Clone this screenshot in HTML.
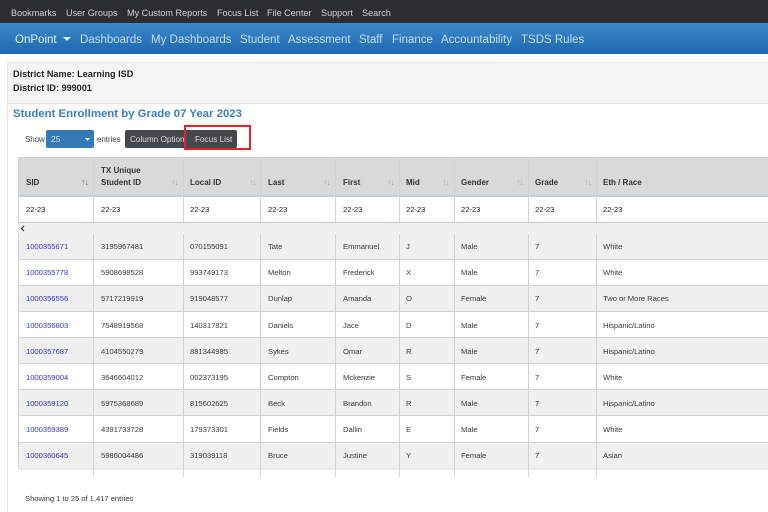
<!DOCTYPE html>
<html><head><meta charset="utf-8">
<style>
*{box-sizing:border-box}
html,body{margin:0;padding:0}
body{width:768px;height:512px;overflow:hidden;background:#fff;position:relative;font-family:"Liberation Sans",sans-serif;color:#333}
#wrap{position:absolute;left:0;top:0;width:768px;height:512px;overflow:hidden;filter:blur(0.3px)}
.a{position:absolute;white-space:nowrap}
#top{left:0;top:0;width:768px;height:23px;background:#2c2d30}
.t{top:6.5px;font-size:9.1px;line-height:12px;color:#d2d2d2}
#nav{left:0;top:23px;width:768px;height:31px;background:linear-gradient(#3f87c8,#1b69b3)}
.n{top:31.5px;font-size:11.5px;line-height:16px;color:#c6dcf0}
#panel{left:7px;top:62px;width:770px;height:450px;border:1px solid #e6e6e6;border-right:0;border-bottom:0}
#ph{left:8px;top:63px;width:760px;height:41px;background:#f5f5f5;border-bottom:1px solid #e3e3e3}
.b{font-weight:bold;font-size:9.1px;line-height:12px;color:#222}
.c{font-size:7.7px;line-height:10px;color:#3c3c3c;letter-spacing:-.06px}
.h{font-weight:bold;font-size:8px;line-height:12px;color:#333}
.s{font-size:9px;line-height:10px;color:#b0b0b0;letter-spacing:-1px}
.f{font-size:7.7px;line-height:10px;color:#1c1c1c;letter-spacing:-.08px}
.vl{position:absolute;width:1px;background:#cdd3d8}
.hl{position:absolute;left:18px;width:750px;height:1px;background:#cdd3d8}
.row{position:absolute;left:18px;width:750px}
.l{color:#3636e0}.m{color:#4a3a35}
</style></head><body><div id="wrap">
<div class="a" id="top"></div>
<div class="a t" style="left:11px">Bookmarks</div>
<div class="a t" style="left:66px">User Groups</div>
<div class="a t" style="left:127px">My Custom Reports</div>
<div class="a t" style="left:217px">Focus List</div>
<div class="a t" style="left:267px">File Center</div>
<div class="a t" style="left:321px">Support</div>
<div class="a t" style="left:362px">Search</div>
<div class="a" id="nav"></div>
<div class="a n" style="left:15px;color:#e4eff9">OnPoint</div>
<svg class="a" style="left:63px;top:37px" width="8" height="5"><path d="M0 0H8L4 4Z" fill="#e4eff9"/></svg>
<div class="a n" style="left:80px">Dashboards</div>
<div class="a n" style="left:151px">My Dashboards</div>
<div class="a n" style="left:240px">Student</div>
<div class="a n" style="left:288px">Assessment</div>
<div class="a n" style="left:359px">Staff</div>
<div class="a n" style="left:392px">Finance</div>
<div class="a n" style="left:441px">Accountability</div>
<div class="a n" style="left:521px">TSDS Rules</div>

<div class="a" id="panel"></div>
<div class="a" id="ph"></div>
<div class="a b" style="left:13px;top:68px">District Name: Learning ISD</div>
<div class="a b" style="left:13px;top:82px">District ID: 999001</div>
<div class="a" style="left:13px;top:107px;font-size:11.4px;line-height:15px;font-weight:bold;color:#3a7fc0">Student Enrollment by Grade 07 Year 2023</div>

<div class="a c" style="left:25px;top:134.5px;font-size:8px">Show</div>
<div class="a" style="left:46px;top:130px;width:48px;height:18px;background:#337ab7;border-radius:2px;color:#d5e5f3;font-size:8.5px;line-height:19px;padding-left:5px">25</div>
<svg class="a" style="left:85px;top:138px" width="6" height="4"><path d="M0 0H5L2.5 3Z" fill="#e8f0f8"/></svg>
<div class="a c" style="left:97px;top:134.5px;font-size:8px">entries</div>
<div class="a" style="left:125px;top:130px;width:62px;height:18px;background:#44474c;border-radius:2px 0 0 2px;color:#ddd;font-size:8.2px;line-height:19px;padding-left:5px;overflow:hidden">Column Options</div>
<div class="a" style="left:185px;top:130px;width:52px;height:18px;background:#44474c;border-radius:0 2px 2px 0;color:#ddd;font-size:8.2px;line-height:19px;padding-left:10px">Focus List</div>
<div class="a" style="left:184px;top:125px;width:67px;height:25px;border:2.5px solid #e8202a"></div>

<div class="row" style="top:157px;height:40px;background:#d9d9d9;border-top:1px solid #c9ced3;border-bottom:2px solid #c3cad1"></div>
<div class="row" style="top:222px;height:12px;background:#efefef;border-top:1px solid #c3cad1"></div>
<div class="row" style="top:234px;height:26px;background:#f0f0f0"></div>
<div class="row" style="top:286px;height:26px;background:#f0f0f0"></div>
<div class="row" style="top:338px;height:26px;background:#f0f0f0"></div>
<div class="row" style="top:390px;height:26px;background:#f0f0f0"></div>
<div class="row" style="top:442px;height:26px;background:#f0f0f0"></div>
<div class="row" style="top:467px;height:3px;background:#ebebeb"></div>

<div class="hl" style="top:259px"></div><div class="hl" style="top:285px"></div><div class="hl" style="top:311px"></div><div class="hl" style="top:337px"></div><div class="hl" style="top:363px"></div><div class="hl" style="top:389px"></div><div class="hl" style="top:415px"></div><div class="hl" style="top:442px"></div>

<div class="vl" style="left:18px;top:157px;height:65px"></div><div class="vl" style="left:18px;top:234px;height:233px"></div>
<div class="vl" style="left:93px;top:157px;height:65px"></div><div class="vl" style="left:93px;top:234px;height:243px"></div>
<div class="vl" style="left:183px;top:157px;height:65px"></div><div class="vl" style="left:183px;top:234px;height:243px"></div>
<div class="vl" style="left:260px;top:157px;height:65px"></div><div class="vl" style="left:260px;top:234px;height:243px"></div>
<div class="vl" style="left:335px;top:157px;height:65px"></div><div class="vl" style="left:335px;top:234px;height:243px"></div>
<div class="vl" style="left:399px;top:157px;height:65px"></div><div class="vl" style="left:399px;top:234px;height:243px"></div>
<div class="vl" style="left:454px;top:157px;height:65px"></div><div class="vl" style="left:454px;top:234px;height:243px"></div>
<div class="vl" style="left:528px;top:157px;height:65px"></div><div class="vl" style="left:528px;top:234px;height:243px"></div>
<div class="vl" style="left:596px;top:157px;height:65px"></div><div class="vl" style="left:596px;top:234px;height:243px"></div>

<div class="a h" style="left:26px;top:177px">SID</div>
<div class="a h" style="left:101px;top:165px">TX Unique</div>
<div class="a h" style="left:101px;top:177px">Student ID</div>
<div class="a h" style="left:190px;top:177px">Local ID</div>
<div class="a h" style="left:268px;top:177px">Last</div>
<div class="a h" style="left:343px;top:177px">First</div>
<div class="a h" style="left:406px;top:177px">Mid</div>
<div class="a h" style="left:461px;top:177px">Gender</div>
<div class="a h" style="left:535px;top:177px">Grade</div>
<div class="a h" style="left:603px;top:177px">Eth / Race</div>
<div class="a s" style="left:81px;top:177px;color:#777">↑↓</div>
<div class="a s" style="left:171px;top:177px">↑↓</div>
<div class="a s" style="left:249px;top:177px">↑↓</div>
<div class="a s" style="left:323px;top:177px">↑↓</div>
<div class="a s" style="left:387px;top:177px">↑↓</div>
<div class="a s" style="left:442px;top:177px">↑↓</div>
<div class="a s" style="left:516px;top:177px">↑↓</div>
<div class="a s" style="left:584px;top:177px">↑↓</div>

<div class="a f" style="left:26px;top:205px">22-23</div>
<div class="a f" style="left:101px;top:205px">22-23</div>
<div class="a f" style="left:190px;top:205px">22-23</div>
<div class="a f" style="left:268px;top:205px">22-23</div>
<div class="a f" style="left:343px;top:205px">22-23</div>
<div class="a f" style="left:406px;top:205px">22-23</div>
<div class="a f" style="left:461px;top:205px">22-23</div>
<div class="a f" style="left:535px;top:205px">22-23</div>
<div class="a f" style="left:603px;top:205px">22-23</div>
<svg class="a" style="left:20px;top:225px" width="5" height="7"><path d="M4 1L1.5 3.5L4 6" fill="none" stroke="#333" stroke-width="1.2"/></svg>

<div class="a c l" style="left:26px;top:242px">1000355671</div><div class="a c" style="left:101px;top:242px">3195967481</div><div class="a c" style="left:190px;top:242px">070155091</div><div class="a c" style="left:268px;top:242px">Tate</div><div class="a c" style="left:343px;top:242px">Emmanuel</div><div class="a c m" style="left:406px;top:242px">J</div><div class="a c" style="left:461px;top:242px">Male</div><div class="a c" style="left:535px;top:242px">7</div><div class="a c" style="left:603px;top:242px">White</div>
<div class="a c l" style="left:26px;top:268px">1000355778</div><div class="a c" style="left:101px;top:268px">5908698528</div><div class="a c" style="left:190px;top:268px">993749173</div><div class="a c" style="left:268px;top:268px">Melton</div><div class="a c" style="left:343px;top:268px">Frederick</div><div class="a c m" style="left:406px;top:268px">X</div><div class="a c" style="left:461px;top:268px">Male</div><div class="a c" style="left:535px;top:268px">7</div><div class="a c" style="left:603px;top:268px">White</div>
<div class="a c l" style="left:26px;top:294px">1000356556</div><div class="a c" style="left:101px;top:294px">5717219919</div><div class="a c" style="left:190px;top:294px">919048577</div><div class="a c" style="left:268px;top:294px">Dunlap</div><div class="a c" style="left:343px;top:294px">Amanda</div><div class="a c m" style="left:406px;top:294px">O</div><div class="a c" style="left:461px;top:294px">Female</div><div class="a c" style="left:535px;top:294px">7</div><div class="a c" style="left:603px;top:294px">Two or More Races</div>
<div class="a c l" style="left:26px;top:321px">1000356803</div><div class="a c" style="left:101px;top:321px">7548919568</div><div class="a c" style="left:190px;top:321px">140317821</div><div class="a c" style="left:268px;top:321px">Daniels</div><div class="a c" style="left:343px;top:321px">Jace</div><div class="a c m" style="left:406px;top:321px">D</div><div class="a c" style="left:461px;top:321px">Male</div><div class="a c" style="left:535px;top:321px">7</div><div class="a c" style="left:603px;top:321px">Hispanic/Latino</div>
<div class="a c l" style="left:26px;top:347px">1000357687</div><div class="a c" style="left:101px;top:347px">4104550279</div><div class="a c" style="left:190px;top:347px">881344985</div><div class="a c" style="left:268px;top:347px">Sykes</div><div class="a c" style="left:343px;top:347px">Omar</div><div class="a c m" style="left:406px;top:347px">R</div><div class="a c" style="left:461px;top:347px">Male</div><div class="a c" style="left:535px;top:347px">7</div><div class="a c" style="left:603px;top:347px">Hispanic/Latino</div>
<div class="a c l" style="left:26px;top:373px">1000359004</div><div class="a c" style="left:101px;top:373px">3646604012</div><div class="a c" style="left:190px;top:373px">002373195</div><div class="a c" style="left:268px;top:373px">Compton</div><div class="a c" style="left:343px;top:373px">Mckenzie</div><div class="a c m" style="left:406px;top:373px">S</div><div class="a c" style="left:461px;top:373px">Female</div><div class="a c" style="left:535px;top:373px">7</div><div class="a c" style="left:603px;top:373px">White</div>
<div class="a c l" style="left:26px;top:399px">1000359120</div><div class="a c" style="left:101px;top:399px">5975368689</div><div class="a c" style="left:190px;top:399px">815602625</div><div class="a c" style="left:268px;top:399px">Beck</div><div class="a c" style="left:343px;top:399px">Brandon</div><div class="a c m" style="left:406px;top:399px">R</div><div class="a c" style="left:461px;top:399px">Male</div><div class="a c" style="left:535px;top:399px">7</div><div class="a c" style="left:603px;top:399px">Hispanic/Latino</div>
<div class="a c l" style="left:26px;top:425px">1000359389</div><div class="a c" style="left:101px;top:425px">4391733728</div><div class="a c" style="left:190px;top:425px">179373301</div><div class="a c" style="left:268px;top:425px">Fields</div><div class="a c" style="left:343px;top:425px">Dallin</div><div class="a c m" style="left:406px;top:425px">E</div><div class="a c" style="left:461px;top:425px">Male</div><div class="a c" style="left:535px;top:425px">7</div><div class="a c" style="left:603px;top:425px">White</div>
<div class="a c l" style="left:26px;top:451px">1000360645</div><div class="a c" style="left:101px;top:451px">5986004486</div><div class="a c" style="left:190px;top:451px">319039118</div><div class="a c" style="left:268px;top:451px">Bruce</div><div class="a c" style="left:343px;top:451px">Justine</div><div class="a c m" style="left:406px;top:451px">Y</div><div class="a c" style="left:461px;top:451px">Female</div><div class="a c" style="left:535px;top:451px">7</div><div class="a c" style="left:603px;top:451px">Asian</div>

<div class="a c" style="left:25px;top:494px;font-size:7.7px">Showing 1 to 25 of 1,417 entries</div>
</div></body></html>
